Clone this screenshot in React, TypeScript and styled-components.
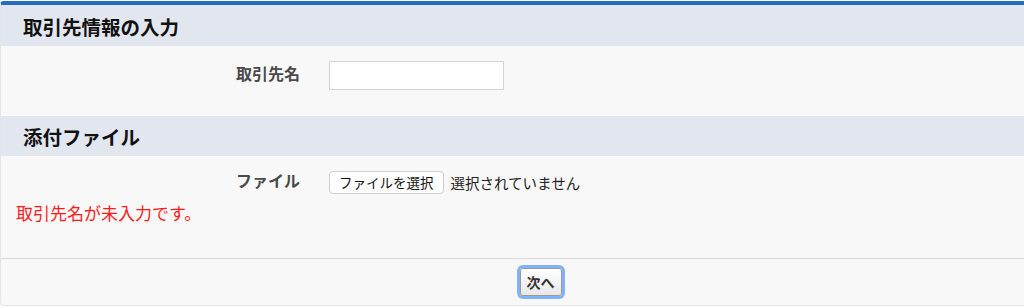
import React from "react";
import styled, { createGlobalStyle } from "styled-components";

const GlobalStyle = createGlobalStyle`
  html, body {
    margin: 0;
    padding: 0;
    background: #ffffff;
    font-family: "Noto Sans CJK JP", "Noto Sans", "Liberation Sans", sans-serif;
  }
`;

const Page = styled.div`
  padding-top: 1px;
`;

const Panel = styled.form`
  border: 1px solid #e4e4e4;
  border-right: none;
  border-top: 4px solid #236cc2;
  border-radius: 4px 0 0 4px;
  background: #f8f8f8;
  overflow: hidden;
`;

const SectionHeader = styled.h2<{ $first?: boolean }>`
  margin: 0;
  height: 40px;
  display: flex;
  align-items: center;
  padding-left: 22px;
  background: #e1e6ef;
  border-top: 1px solid ${(p) => (p.$first ? "transparent" : "#ffffff")};
  font-size: 19.5px;
  font-weight: 700;
  color: #111;
`;

const SectionBody = styled.div<{ $height: number; $top: number }>`
  height: ${(p) => p.$height}px;
  box-sizing: border-box;
  padding-top: ${(p) => p.$top}px;
`;

const FieldRow = styled.div`
  display: grid;
  grid-template-columns: 299px 1fr;
  column-gap: 29px;
  align-items: center;
`;

const Label = styled.label`
  text-align: right;
  padding-bottom: 5px;
  font-size: 16px;
  font-weight: 700;
  color: #4a4a4a;
`;

const TextInput = styled.input`
  width: 175px;
  height: 29px;
  box-sizing: border-box;
  border: 1px solid #d4d4d4;
  background: #fff;
  outline: none;
`;

const FileControl = styled.div`
  display: flex;
  align-items: center;
  gap: 7px;
  height: 29px;
`;

const FileButton = styled.button`
  height: 23px;
  padding: 0 9px;
  border: 1px solid #cfcfcf;
  border-radius: 4px;
  background: #ffffff;
  font-family: inherit;
  font-size: 13.5px;
  color: #111;
  line-height: 1;
`;

const FileStatus = styled.span`
  font-size: 14.5px;
  color: #222;
`;

const ErrorText = styled.p`
  margin: 3px 0 0 15px;
  font-size: 17px;
  color: #ff1a1a;
`;

const Footer = styled.div`
  border-top: 1px solid #dadada;
  height: 46px;
  display: flex;
  justify-content: center;
  align-items: center;
`;

const SubmitButton = styled.button`
  height: 28px;
  padding: 0 6px;
  border: 1px solid #9a9a9a;
  border-radius: 3px;
  background: linear-gradient(#ffffff, #e8e8e8);
  box-shadow: 0 0 0 3px #7fb3f7;
  font-family: inherit;
  font-size: 14px;
  font-weight: 700;
  color: #333;
  margin-left: 56px;
`;

const App: React.FC = () => {
  return (
    <Page>
      <GlobalStyle />
      <Panel onSubmit={(e) => e.preventDefault()}>
        <SectionHeader $first>取引先情報の入力</SectionHeader>
        <SectionBody $height={69} $top={15}>
          <FieldRow>
            <Label htmlFor="account">取引先名</Label>
            <TextInput id="account" type="text" />
          </FieldRow>
        </SectionBody>
        <SectionHeader>添付ファイル</SectionHeader>
        <SectionBody $height={102} $top={12}>
          <FieldRow>
            <Label>ファイル</Label>
            <FileControl>
              <FileButton type="button">ファイルを選択</FileButton>
              <FileStatus>選択されていません</FileStatus>
            </FileControl>
          </FieldRow>
          <ErrorText>取引先名が未入力です。</ErrorText>
        </SectionBody>
        <Footer>
          <SubmitButton type="submit">次へ</SubmitButton>
        </Footer>
      </Panel>
    </Page>
  );
};

export default App;
